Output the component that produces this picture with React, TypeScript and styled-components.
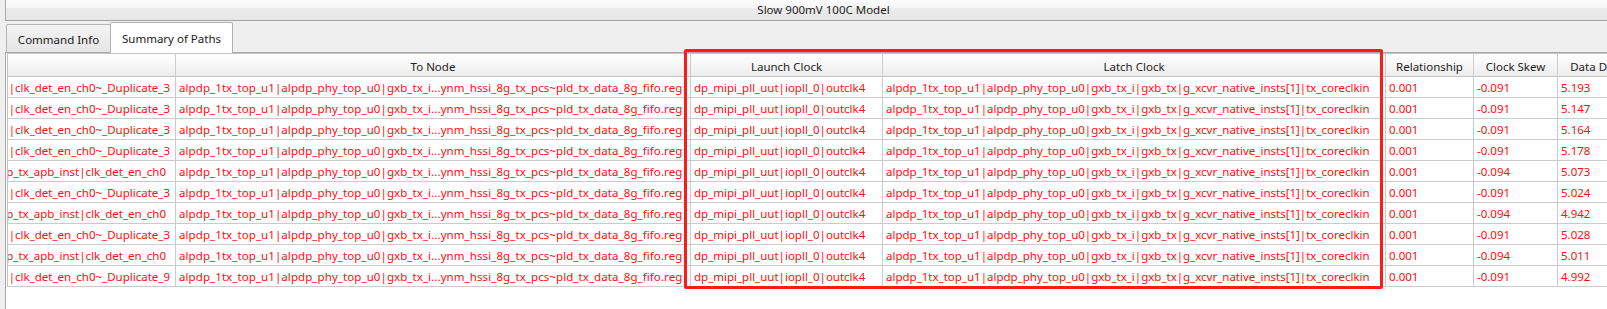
import React from 'react';
import styled, { createGlobalStyle } from 'styled-components';

const Global = createGlobalStyle`
  html, body { margin: 0; padding: 0; background: #efefef; }
  body { font-family: "Noto Sans", "Liberation Sans", sans-serif; font-size: 11.5px; overflow: hidden; }
  #root { width: 1607px; height: 309px; overflow: hidden; }
`;

const Window = styled.div`
  position: relative;
  width: 1607px;
  height: 309px;
  overflow: hidden;
  background: #efefef;
`;

const Panel = styled.div`
  margin-left: 5px;
  width: 1636px;
  height: 309px;
  display: flex;
  flex-direction: column;
`;

const TitleBar = styled.div`
  height: 20px;
  border-left: 1px solid #a9a9a9;
  border-bottom: 1px solid #a3a3a3;
  background: linear-gradient(#fbfbfb 0%, #f7f7f7 38%, #ebebeb 42%, #e7e7e7 100%);
  display: flex;
  align-items: center;
  justify-content: center;
  color: #1e1e1e;
  font-size: 11.5px;
  line-height: 20px;
`;

const TabBar = styled.div`
  height: 31px;
  display: flex;
  align-items: flex-end;
  padding-left: 1px;
  background: #efefef;
`;

const Tab = styled.div<{ $active?: boolean; $w: number }>`
  box-sizing: border-box;
  width: ${p => p.$w}px;
  height: ${p => (p.$active ? 31 : 28)}px;
  margin-bottom: ${p => (p.$active ? -1 : 0)}px;
  position: relative;
  z-index: ${p => (p.$active ? 2 : 1)};
  border: 1px solid #b3b3b3;
  border-bottom: none;
  border-radius: 2px 2px 0 0;
  margin-left: ${p => (p.$active ? -1 : 0)}px;
  background: ${p => (p.$active ? '#ffffff' : 'linear-gradient(#f3f3f3, #e6e6e6)')};
  display: flex;
  justify-content: center;
  align-items: center;
  padding-top: ${p => (p.$active ? 1 : 2)}px;
  color: #1a1a1a;
  font-size: 11.5px;
`;

const Pane = styled.div`
  flex: 1;
  border-top: 1px solid #a8a8a8;
  border-left: 1px solid #a8a8a8;
  background: #ffffff;
  padding-left: 1px;
  overflow: hidden;
`;

const COLS = [168, 515, 192, 503, 88, 84, 84];

const Table = styled.div`
  display: grid;
  grid-template-columns: ${COLS.map(c => `${c}px`).join(' ')};
  border-left: 1px solid #c4c4c4;
  border-top: 1px solid #c4c4c4;
  width: max-content;
`;

const HeadCell = styled.div`
  box-sizing: border-box;
  height: 23px;
  border-right: 1px solid #cdcdcd;
  border-bottom: 1px solid #c4c4c4;
  background: linear-gradient(#ffffff 0%, #f7f7f7 45%, #ededed 100%);
  display: flex;
  align-items: center;
  justify-content: center;
  padding-top: 3px;
  color: #1c1c1c;
  font-size: 11.5px;
  white-space: nowrap;
  overflow: hidden;
`;

const Cell = styled.div<{ $track?: number }>`
  box-sizing: border-box;
  height: 21px;
  border-right: 1px solid #cbcbcb;
  border-bottom: 1px solid #cbcbcb;
  padding: 2px 0 0 3px;
  color: #ff0d0d;
  font-size: 11.5px;
  line-height: 18px;
  letter-spacing: ${p => p.$track ?? 0}px;
  white-space: nowrap;
  overflow: hidden;
`;

const ClippedCell = styled(Cell)<{ $endPad: number }>`
  display: flex;
  justify-content: flex-end;
  padding-left: 0;
  padding-right: ${p => p.$endPad}px;
`;

const Highlight = styled.div`
  position: absolute;
  left: 684px;
  top: 49px;
  width: 699px;
  height: 240px;
  box-sizing: border-box;
  border: 3px solid #ff1a1a;
  border-radius: 2px;
  pointer-events: none;
`;

const TO_NODE = 'alpdp_1tx_top_u1|alpdp_phy_top_u0|gxb_tx_i...ynm_hssi_8g_tx_pcs~pld_tx_data_8g_fifo.reg';
const LAUNCH = 'dp_mipi_pll_uut|iopll_0|outclk4';
const LATCH = 'alpdp_1tx_top_u1|alpdp_phy_top_u0|gxb_tx_i|gxb_tx|g_xcvr_native_insts[1]|tx_coreclkin';

const DUP3 = 'alpdp_1tx_top_u1|clk_det_en_ch0~_Duplicate_3';
const APB = 'alpdp_1tx_top_u1|dp_tx_apb_inst|clk_det_en_ch0';
const DUP9 = 'alpdp_1tx_top_u1|clk_det_en_ch0~_Duplicate_9';

type Row = { from: string; skew: string; delay: string };

const rows: Row[] = [
  { from: DUP3, skew: '-0.091', delay: '5.193' },
  { from: DUP3, skew: '-0.091', delay: '5.147' },
  { from: DUP3, skew: '-0.091', delay: '5.164' },
  { from: DUP3, skew: '-0.091', delay: '5.178' },
  { from: APB, skew: '-0.094', delay: '5.073' },
  { from: DUP3, skew: '-0.091', delay: '5.024' },
  { from: APB, skew: '-0.094', delay: '4.942' },
  { from: DUP3, skew: '-0.091', delay: '5.028' },
  { from: APB, skew: '-0.094', delay: '5.011' },
  { from: DUP9, skew: '-0.091', delay: '4.992' },
];

const headers = ['', 'To Node', 'Launch Clock', 'Latch Clock', 'Relationship', 'Clock Skew', 'Data Delay'];

export default function App() {
  return (
    <Window>
      <Global />
      <Panel>
        <TitleBar>Slow 900mV 100C Model</TitleBar>
        <TabBar>
          <Tab $w={105}>Command Info</Tab>
          <Tab $w={123} $active>Summary of Paths</Tab>
        </TabBar>
        <Pane>
          <Table>
            {headers.map((h, i) => (
              <HeadCell key={i}>{h}</HeadCell>
            ))}
            {rows.map((r, i) => (
              <React.Fragment key={i}>
                <ClippedCell $endPad={r.from === APB ? 9 : 5}>{r.from}</ClippedCell>
                <Cell $track={0.08}>{TO_NODE}</Cell>
                <Cell>{LAUNCH}</Cell>
                <Cell>{LATCH}</Cell>
                <Cell>0.001</Cell>
                <Cell>{r.skew}</Cell>
                <Cell>{r.delay}</Cell>
              </React.Fragment>
            ))}
          </Table>
        </Pane>
      </Panel>
      <Highlight />
    </Window>
  );
}
